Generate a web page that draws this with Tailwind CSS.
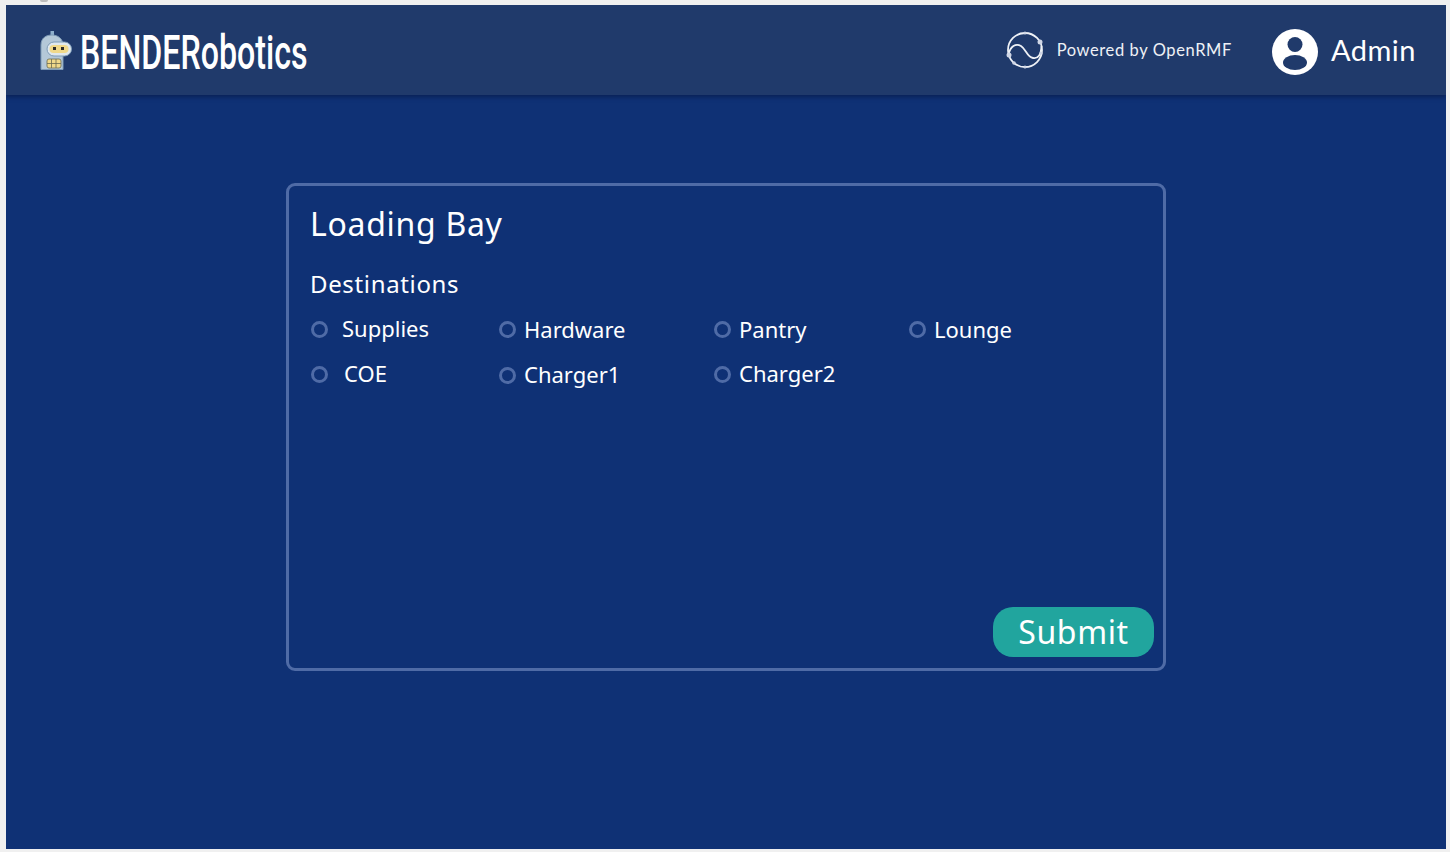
<!DOCTYPE html>
<html lang="en">
<head>
    <meta charset="UTF-8">
    <meta name="viewport" content="width=device-width, initial-scale=1.0">
    <title>BENDERobotics - Loading Bay</title>
    <script src="https://cdn.jsdelivr.net/npm/@tailwindcss/browser@4"></script>
</head>
<body class="relative bg-[#f0f0f0] h-[852px] overflow-hidden pt-[5px] pl-[6px] pr-[4px] pb-[3px] font-['Noto_Sans',sans-serif]">
    <div class="absolute left-[40px] top-0 w-[8px] h-[2px] rounded-b-full bg-[#bdbdbd]"></div>
    <div class="h-full flex flex-col overflow-hidden bg-[#0f3175] text-white">

        <!-- Top bar -->
        <header class="h-[90px] shrink-0 flex items-center bg-[#203a6b] shadow-[0_2px_4px_rgba(5,20,60,0.55)] pt-[4px] pl-[34px] pr-[30px]">
            <svg class="w-[32px] h-[39px] mt-[-4px]" viewBox="0 0 32 39">
                <rect x="10.500" y="0" width="3.500" height="5" fill="#8fb0cc"/>
                <path d="M1 38.500V14C1 7 6 4 12 4C18 4 23 8 23 14V38.500Z" fill="#b4c8d8" stroke="#7f9cb8" stroke-width="1"/>
                <rect x="7" y="11" width="24.500" height="14" rx="7" fill="#dfe8ee" stroke="#7f9cb8" stroke-width="1"/>
                <rect x="9.500" y="14" width="19" height="8" rx="4" fill="#f0d98a"/>
                <rect x="13" y="16" width="3" height="3" fill="#2a2a2a"/>
                <rect x="21" y="16" width="3" height="3" fill="#2a2a2a"/>
                <rect x="7" y="28" width="14" height="9" rx="2" fill="#f0d98a" stroke="#6b6b50" stroke-width="0.800"/>
                <path d="M7 32.500H21M11.500 28V37M16 28V37" stroke="#6b6b50" stroke-width="0.800"/>
            </svg>
            <span class="ml-[8px] mt-[2px] w-[228px] text-[48px] leading-none font-medium font-['Roboto',sans-serif] scale-x-[0.67] origin-left whitespace-nowrap">BENDERobotics</span>

            <svg class="ml-auto w-[38px] h-[38px] mt-[-4px]" viewBox="0 0 38 38" fill="none" stroke="#eef1f6" stroke-width="1.800">
                <circle cx="19" cy="19" r="17"/>
                <path d="M2.500 24C4 15 10 12 15 15C20 18 21 26 27 27C32 28 35 24 35.500 15"/>
                <g fill="#cfd6e6" stroke="none">
                    <circle cx="34" cy="11" r="2.500"/>
                    <circle cx="3" cy="24" r="2.500"/>
                    <circle cx="35" cy="22" r="1.500"/>
                    <circle cx="19" cy="2" r="1.500"/>
                    <circle cx="19" cy="36" r="1.500"/>
                    <circle cx="8" cy="32" r="1.800"/>
                </g>
            </svg>
            <span class="ml-[13px] mt-[-3px] text-[16.500px] tracking-[0.6px] font-['Lato',sans-serif] text-[#eef1f6]">Powered by OpenRMF</span>

            <svg class="ml-[40px] w-[46px] h-[46px]" viewBox="0 0 46 46">
                <circle cx="23" cy="23" r="23" fill="#fff"/>
                <circle cx="23" cy="15.500" r="7.500" fill="#203a6b"/>
                <ellipse cx="23" cy="33.500" rx="12" ry="7.500" fill="#203a6b"/>
            </svg>
            <span class="ml-[13px] mt-[-5px] text-[29px] leading-none font-['Lato',sans-serif] tracking-[0.5px]">Admin</span>
        </header>

        <!-- Delivery form -->
        <main class="flex-1">
            <section class="w-[880px] h-[488px] mx-auto mt-[88px] flex flex-col border-[3px] border-[#4f6ba6] rounded-[9px] pt-[16px] pl-[21px] pr-[9px] pb-[11px]">
                <h1 class="text-[32px] leading-[44px] tracking-[0.7px]">Loading Bay</h1>
                <h2 class="mt-[21px] text-[24px] leading-[34px] tracking-[0.65px]">Destinations</h2>

                <div class="mt-[12px] ml-[1px] grid grid-cols-[188px_215px_195px_1fr] auto-rows-[45px] text-[22px] leading-[30px]">
                    <label class="flex items-start gap-[14px]">
                        <span class="mt-[8px] size-[17px] rounded-full border-[3px] border-[#4f6ba6]"></span>
                        <span>Supplies</span>
                    </label>
                    <label class="flex items-start gap-[8px] pt-[1px]">
                        <span class="mt-[7px] size-[17px] rounded-full border-[3px] border-[#4f6ba6]"></span>
                        <span>Hardware</span>
                    </label>
                    <label class="flex items-start gap-[8px] pt-[1px]">
                        <span class="mt-[7px] size-[17px] rounded-full border-[3px] border-[#4f6ba6]"></span>
                        <span>Pantry</span>
                    </label>
                    <label class="flex items-start gap-[8px] pt-[1px]">
                        <span class="mt-[7px] size-[17px] rounded-full border-[3px] border-[#4f6ba6]"></span>
                        <span>Lounge</span>
                    </label>
                    <label class="flex items-start gap-[16px]">
                        <span class="mt-[8px] size-[17px] rounded-full border-[3px] border-[#4f6ba6]"></span>
                        <span>COE</span>
                    </label>
                    <label class="flex items-start gap-[8px] pt-[1px]">
                        <span class="mt-[8px] size-[17px] rounded-full border-[3px] border-[#4f6ba6]"></span>
                        <span>Charger1</span>
                    </label>
                    <label class="flex items-start gap-[8px]">
                        <span class="mt-[8px] size-[17px] rounded-full border-[3px] border-[#4f6ba6]"></span>
                        <span>Charger2</span>
                    </label>
                </div>

                <button class="mt-auto self-end w-[161px] h-[50px] rounded-[20px] bg-[#21a59e] text-[32px] leading-none tracking-[0.6px]">Submit</button>
            </section>
        </main>
    </div>
</body>
</html>
